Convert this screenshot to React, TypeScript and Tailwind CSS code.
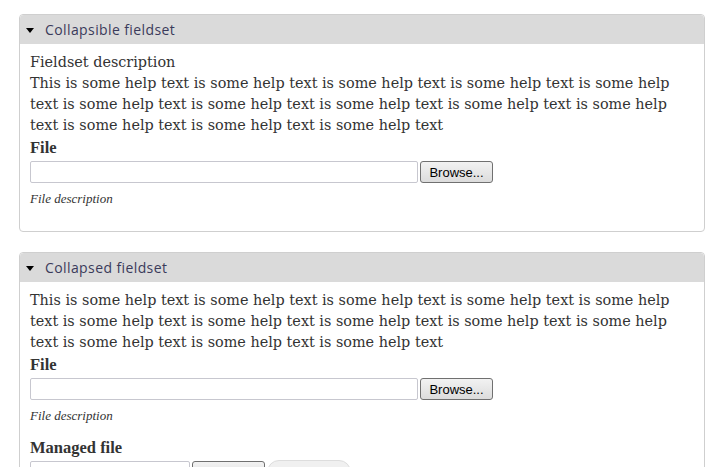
import React from "react";

const help = "This is some help" + " text is some help".repeat(12) + " text";

const serif = { fontFamily: "'DejaVu Serif', Georgia, serif" };
const lserif = { fontFamily: "'Liberation Serif', 'Times New Roman', serif" };

function Legend({ title }: { title: string }) {
  return (
    <div className="h-[29px] bg-[#dadada] flex items-center rounded-t-[4px]">
      <svg width="8" height="5" viewBox="0 0 8 5" className="ml-[6px] mt-[1px]">
        <polygon points="0,0 8,0 4,5" fill="#000" />
      </svg>
      <span
        className="ml-[11px] text-[14px] text-[#3b3b5b] tracking-[0.4px]"
        style={{ fontFamily: "'Open Sans', 'Noto Sans', sans-serif" }}
      >
        {title}
      </span>
    </div>
  );
}

function BrowseButton() {
  return (
    <button
      className="ml-[2px] w-[73px] h-[22px] border border-[#707070] rounded-[3px] bg-gradient-to-b from-[#f2f2f2] to-[#dcdcdc] text-[13px] text-black"
      style={{ fontFamily: "'Liberation Sans', Arial, sans-serif" }}
    >
      Browse...
    </button>
  );
}

function FileRow() {
  return (
    <div className="flex items-center h-[22px]">
      <div className="w-[388px] h-[22px] border border-[#c7c7cf] rounded-[2px] bg-white" />
      <BrowseButton />
    </div>
  );
}

function Label({ children, className = "" }: { children: React.ReactNode; className?: string }) {
  return (
    <div className={"font-bold text-[16.5px] " + className} style={lserif}>
      {children}
    </div>
  );
}

function Desc() {
  return (
    <div className="italic text-[13px] mt-[5px]" style={lserif}>
      File description
    </div>
  );
}

export default function App() {
  return (
    <div
      className="w-[722px] h-[467px] overflow-hidden bg-white text-[#333] text-[14.4px] leading-[21px] pt-[14px] pl-[19px] pr-[17px]"
      style={serif}
    >
      <div className="border border-[#cfcfcf] rounded-[4px]">
        <Legend title="Collapsible fieldset" />
        <div className="px-[10px] pt-[8px] pb-[22px]">
          <div>Fieldset description</div>
          <div className="pr-[4px]">{help}</div>
          <Label className="mt-[1px]">File</Label>
          <div className="mt-[3px]">
            <FileRow />
          </div>
          <Desc />
        </div>
      </div>
      <div className="border border-[#cfcfcf] rounded-[4px] mt-[20px]">
        <Legend title="Collapsed fieldset" />
        <div className="px-[10px] pt-[8px] pb-[21px]">
          <div className="pr-[4px]">{help}</div>
          <Label className="mt-[1px]">File</Label>
          <div className="mt-[3px]">
            <FileRow />
          </div>
          <Desc />
          <Label className="mt-[11px]">Managed file</Label>
          <div className="flex items-center mt-[2px]">
            <div className="w-[160px] h-[22px] border border-[#c7c7cf] rounded-[2px] bg-white" />
            <BrowseButton />
            <button
              className="ml-[2px] w-[84px] h-[24px] border border-[#ddd] rounded-[12px] bg-[#f0f0f0] text-[13px] text-[#555]"
              style={{ fontFamily: "'Liberation Sans', Arial, sans-serif" }}
            >
              Upload
            </button>
          </div>
        </div>
      </div>
    </div>
  );
}
